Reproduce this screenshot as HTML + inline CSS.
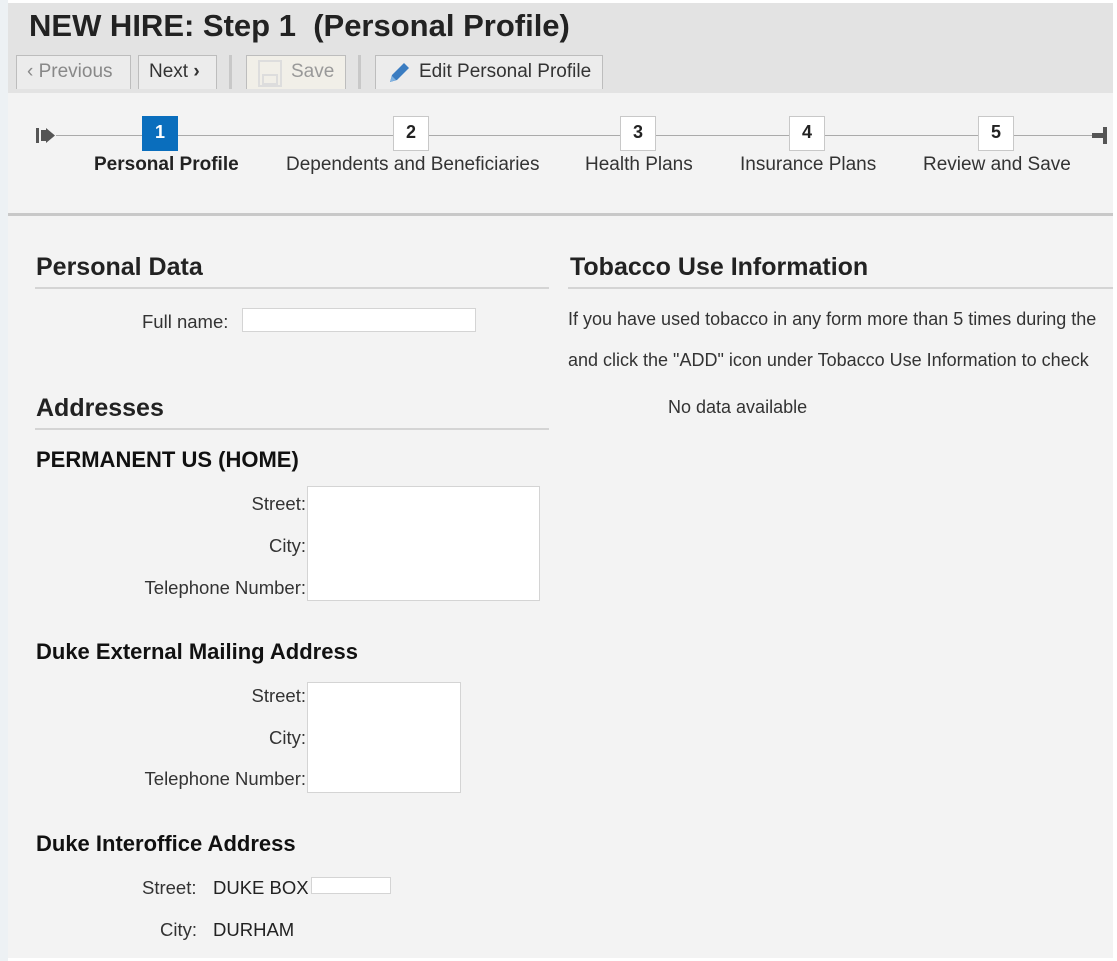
<!DOCTYPE html>
<html><head><meta charset="utf-8"><style>
*{margin:0;padding:0;box-sizing:border-box}
body{width:1117px;height:961px;background:#fff;font-family:"Liberation Sans",Arial,sans-serif;color:#333;position:relative;overflow:hidden}
.a{position:absolute;white-space:nowrap}
#bg{left:8px;top:3px;width:1105px;height:955px;background:#f3f3f3}
#lstrip{left:0;top:0;width:8px;height:961px;background:#edf1f4}
#hdr{left:8px;top:3px;width:1105px;height:90px;background:#e3e3e3}
.btn{top:55px;height:34px;border:1px solid #bdbdbd;border-bottom:none;background:#ececec;font-size:19px;line-height:32px;padding:0 10px;color:#333}
.sep{top:55px;width:3px;height:34px;background:#c8c8c8}
.stp{top:116px;width:36px;height:35px;border:1px solid #c8c8c8;background:#fff;font-size:18px;font-weight:bold;text-align:center;line-height:31px;color:#222}
.sl{top:154px;font-size:19px;color:#333}
.h2{font-size:25px;font-weight:bold;color:#222}
.h3{font-size:22px;font-weight:bold;color:#111}
.lb{font-size:18.5px;color:#333;text-align:right}
.hr{height:2px;background:#d4d4d4}
.box{background:#fff;border:1px solid #d4d4d4}
</style></head><body>
<div class="a" id="bg"></div>
<div class="a" id="lstrip"></div>
<div class="a" id="hdr"></div>
<div class="a" style="left:29px;top:8px;font-size:31px;font-weight:bold;color:#222">NEW HIRE: Step 1&nbsp; (Personal Profile)</div>
<div class="a btn" style="left:16px;width:115px;color:#888;padding-left:10px">‹ Previous</div>
<div class="a btn" style="left:138px;width:79px">Next <b>›</b></div>
<div class="a sep" style="left:229px"></div>
<div class="a btn" style="left:246px;width:100px;background:#f1efe8;color:#999;padding-left:44px">Save</div>
<svg class="a" style="left:258px;top:60px" width="26" height="28"><rect x="1" y="1" width="22" height="25" fill="none" stroke="#ddd" stroke-width="2"/><rect x="5" y="15" width="14" height="9" fill="none" stroke="#ddd" stroke-width="2"/></svg>
<div class="a sep" style="left:358px"></div>
<div class="a btn" style="left:375px;width:228px;padding-left:43px">Edit Personal Profile</div>
<svg class="a" style="left:386px;top:60px" width="26" height="26"><path d="M4 22 L6 15 L18 3 L23 8 L11 20 Z" fill="#3a7cc1"/><path d="M4 22 L6 16 L10 20 Z" fill="#7fb1e0"/></svg>
<div class="a" style="left:56px;top:135px;width:1040px;height:1px;background:#aaa"></div>
<svg class="a" style="left:36px;top:126px" width="24" height="20"><rect x="0" y="2" width="3" height="15" fill="#555"/><path d="M5 4 L10 4 L10 2 L19 9.5 L10 17 L10 15 L5 15 Z" fill="#555"/></svg>
<svg class="a" style="left:1092px;top:126px" width="20" height="20"><rect x="0" y="7" width="12" height="5" fill="#555"/><rect x="11" y="1" width="4" height="17" fill="#555"/></svg>
<div class="a stp" style="left:142px;background:#0a6ebd;border-color:#0a6ebd;color:#fff">1</div>
<div class="a stp" style="left:393px">2</div>
<div class="a stp" style="left:620px">3</div>
<div class="a stp" style="left:789px">4</div>
<div class="a stp" style="left:978px">5</div>
<div class="a sl" style="left:94px;font-weight:bold;color:#222">Personal Profile</div>
<div class="a sl" style="left:286px">Dependents and Beneficiaries</div>
<div class="a sl" style="left:585px">Health Plans</div>
<div class="a sl" style="left:740px">Insurance Plans</div>
<div class="a sl" style="left:923px">Review and Save</div>
<div class="a" style="left:8px;top:213px;width:1105px;height:3px;background:#c8c8c8"></div>
<div class="a h2" style="left:36px;top:253px">Personal Data</div>
<div class="a hr" style="left:35px;top:287px;width:514px"></div>
<div class="a lb" style="left:142px;top:311px">Full name:</div>
<div class="a box" style="left:242px;top:308px;width:234px;height:24px"></div>
<div class="a h2" style="left:36px;top:394px">Addresses</div>
<div class="a hr" style="left:35px;top:428px;width:514px"></div>
<div class="a h3" style="left:36px;top:447px">PERMANENT US (HOME)</div>
<div class="a box" style="left:307px;top:486px;width:233px;height:115px"></div>
<div class="a lb" style="left:100px;width:206px;top:493px">Street:</div>
<div class="a lb" style="left:100px;width:206px;top:535px">City:</div>
<div class="a lb" style="left:100px;width:206px;top:577px">Telephone Number:</div>
<div class="a h3" style="left:36px;top:639px">Duke External Mailing Address</div>
<div class="a box" style="left:307px;top:682px;width:154px;height:111px"></div>
<div class="a lb" style="left:100px;width:206px;top:685px">Street:</div>
<div class="a lb" style="left:100px;width:206px;top:727px">City:</div>
<div class="a lb" style="left:100px;width:206px;top:768px">Telephone Number:</div>
<div class="a h3" style="left:36px;top:831px">Duke Interoffice Address</div>
<div class="a lb" style="left:142px;top:877px">Street:</div>
<div class="a" style="left:213px;top:877px;font-size:18.5px;color:#222">DUKE BOX</div>
<div class="a box" style="left:311px;top:877px;width:80px;height:17px"></div>
<div class="a lb" style="left:160px;top:919px">City:</div>
<div class="a" style="left:213px;top:919px;font-size:18.5px;color:#222">DURHAM</div>
<div class="a h2" style="left:570px;top:253px">Tobacco Use Information</div>
<div class="a hr" style="left:568px;top:287px;width:545px"></div>
<div class="a" style="left:568px;top:309px;font-size:18px;color:#333">If you have used tobacco in any form more than 5 times during the</div>
<div class="a" style="left:568px;top:350px;font-size:18px;color:#333">and click the "ADD" icon under Tobacco Use Information to check</div>
<div class="a" style="left:668px;top:397px;font-size:18px;color:#333">No data available</div>
<div class="a" style="left:1113px;top:0;width:4px;height:961px;background:#fff"></div>
</body></html>
